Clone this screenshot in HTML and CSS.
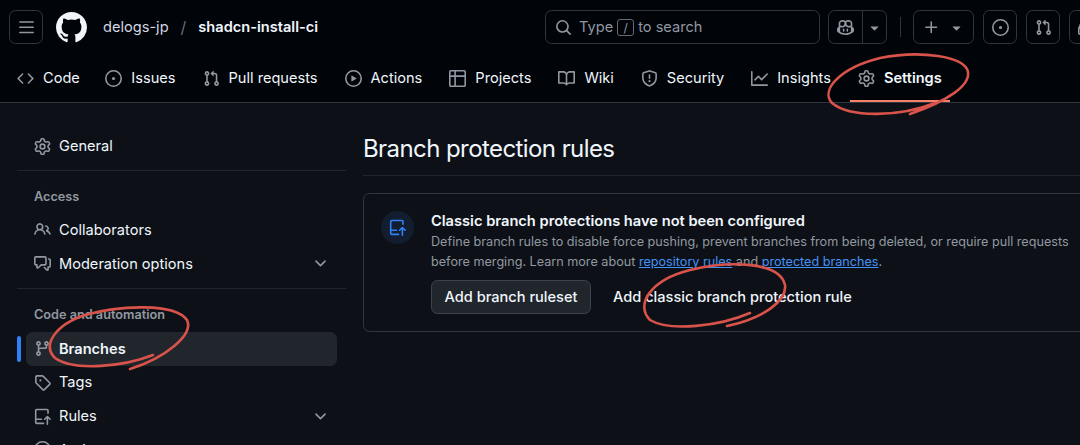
FILE: index.html
```html
<!DOCTYPE html>
<html lang="en">
<head>
<meta charset="utf-8">
<title>Branch protection rules</title>
<link rel="stylesheet" href="styles.css">
</head>
<body>
<svg class="sprite" xmlns="http://www.w3.org/2000/svg">
<symbol id="i-bars" viewBox="0 0 16 16"><path d="M1 2.75A.75.75 0 0 1 1.75 2h12.5a.75.75 0 0 1 0 1.5H1.75A.75.75 0 0 1 1 2.75Zm0 5A.75.75 0 0 1 1.75 7h12.5a.75.75 0 0 1 0 1.5H1.75A.75.75 0 0 1 1 7.75ZM1.75 12h12.5a.75.75 0 0 1 0 1.5H1.75a.75.75 0 0 1 0-1.5Z"/></symbol>
<symbol id="i-github" viewBox="0 0 16 16"><path d="M8 0c4.42 0 8 3.58 8 8a8.013 8.013 0 0 1-5.45 7.59c-.4.08-.55-.17-.55-.38 0-.27.01-1.13.01-2.2 0-.75-.25-1.23-.54-1.48 1.78-.2 3.65-.88 3.65-3.95 0-.88-.31-1.59-.82-2.15.08-.2.36-1.02-.08-2.12 0 0-.67-.22-2.2.82-.64-.18-1.32-.27-2-.27-.68 0-1.36.09-2 .27-1.53-1.03-2.2-.82-2.2-.82-.44 1.1-.16 1.92-.08 2.12-.51.56-.82 1.28-.82 2.15 0 3.06 1.86 3.75 3.64 3.95-.23.2-.44.55-.51 1.07-.46.21-1.61.55-2.33-.66-.15-.24-.6-.83-1.23-.82-.67.01-.27.38.01.53.34.19.73.9.82 1.13.16.45.68 1.31 2.69.94 0 .67.01 1.3.01 1.49 0 .21-.15.45-.55.38A7.995 7.995 0 0 1 0 8c0-4.42 3.58-8 8-8Z"/></symbol>
<symbol id="i-search" viewBox="0 0 16 16"><path d="M10.68 11.74a6 6 0 0 1-7.922-8.982 6 6 0 0 1 8.982 7.922l3.04 3.04a.749.749 0 0 1-.326 1.275.749.749 0 0 1-.734-.215ZM11.5 7a4.499 4.499 0 1 0-8.997 0A4.499 4.499 0 0 0 11.5 7Z"/></symbol>
<symbol id="i-copilot" viewBox="0 0 16 16"><path d="M7.998 15.035c-4.562 0-7.873-2.914-7.998-3.749V9.338c.085-.628.677-1.686 1.588-2.065.013-.07.024-.143.036-.218.029-.183.06-.384.126-.612-.201-.508-.254-1.084-.254-1.656 0-.87.128-1.769.693-2.484.579-.733 1.494-1.124 2.724-1.261 1.206-.134 2.262.034 2.944.765.05.053.096.108.139.165.044-.057.094-.112.143-.165.682-.731 1.738-.899 2.944-.765 1.23.137 2.145.528 2.724 1.261.566.715.693 1.614.693 2.484 0 .572-.053 1.148-.254 1.656.066.228.098.429.126.612.012.076.024.148.037.218.924.385 1.522 1.471 1.591 2.095v1.872c0 .766-3.351 3.795-8.002 3.795Zm0-1.485c2.28 0 4.584-1.11 5.002-1.433V7.862l-.023-.116c-.49.21-1.075.291-1.727.291-1.146 0-2.059-.327-2.71-.991A3.222 3.222 0 0 1 8 6.303a3.24 3.24 0 0 1-.544.743c-.65.664-1.563.991-2.71.991-.652 0-1.236-.081-1.727-.291l-.023.116v4.255c.419.323 2.722 1.433 5.002 1.433ZM6.762 2.83c-.193-.206-.637-.413-1.682-.297-1.019.113-1.479.404-1.713.7-.247.312-.369.789-.369 1.554 0 .793.129 1.171.308 1.371.162.181.519.379 1.442.379.853 0 1.339-.235 1.638-.54.315-.322.527-.827.617-1.553.117-.935-.037-1.395-.241-1.614Zm4.155-.297c-1.044-.116-1.488.091-1.681.297-.204.219-.359.679-.242 1.614.091.726.303 1.231.618 1.553.299.305.784.54 1.638.54.922 0 1.28-.198 1.442-.379.179-.2.308-.578.308-1.371 0-.765-.123-1.242-.37-1.554-.233-.296-.693-.587-1.713-.7Z"/><path d="M6.25 9.037a.75.75 0 0 1 .75.75v1.501a.75.75 0 0 1-1.5 0V9.787a.75.75 0 0 1 .75-.75Zm4.25.75v1.501a.75.75 0 0 1-1.5 0V9.787a.75.75 0 0 1 1.5 0Z"/></symbol>
<symbol id="i-caret" viewBox="0 0 16 16"><path d="m4.427 7.427 3.396 3.396a.25.25 0 0 0 .354 0l3.396-3.396A.25.25 0 0 0 11.396 7H4.604a.25.25 0 0 0-.177.427Z"/></symbol>
<symbol id="i-plus" viewBox="0 0 16 16"><path d="M7.75 2a.75.75 0 0 1 .75.75V7h4.25a.75.75 0 0 1 0 1.5H8.5v4.25a.75.75 0 0 1-1.5 0V8.5H2.75a.75.75 0 0 1 0-1.5H7V2.75A.75.75 0 0 1 7.75 2Z"/></symbol>
<symbol id="i-issue" viewBox="0 0 16 16"><path d="M8 9.5a1.5 1.5 0 1 0 0-3 1.5 1.5 0 0 0 0 3Z"/><path d="M8 0a8 8 0 1 1 0 16A8 8 0 0 1 8 0ZM1.5 8a6.5 6.5 0 1 0 13 0 6.5 6.5 0 0 0-13 0Z"/></symbol>
<symbol id="i-pr" viewBox="0 0 16 16"><path d="M1.5 3.25a2.25 2.25 0 1 1 3 2.122v5.256a2.251 2.251 0 1 1-1.5 0V5.372A2.25 2.25 0 0 1 1.5 3.25Zm5.677-.177L9.573.677A.25.25 0 0 1 10 .854V2.5h1A2.5 2.5 0 0 1 13.5 5v5.628a2.251 2.251 0 1 1-1.5 0V5a1 1 0 0 0-1-1h-1v1.646a.25.25 0 0 1-.427.177L7.177 3.427a.25.25 0 0 1 0-.354ZM3.75 2.5a.75.75 0 1 0 0 1.5.75.75 0 0 0 0-1.5Zm0 9.5a.75.75 0 1 0 0 1.5.75.75 0 0 0 0-1.5Zm8.25.75a.75.75 0 1 0 1.5 0 .75.75 0 0 0-1.5 0Z"/></symbol>
<symbol id="i-inbox" viewBox="0 0 16 16"><path d="M2.8 2.06A1.75 1.75 0 0 1 4.41 1h7.18c.7 0 1.333.417 1.61 1.06l2.74 6.395c.04.093.06.194.06.295v4.5A1.75 1.75 0 0 1 14.25 15H1.75A1.75 1.75 0 0 1 0 13.25v-4.5c0-.101.02-.202.06-.295Zm1.61.44a.25.25 0 0 0-.23.152L1.887 8H4.75a.75.75 0 0 1 .6.3L6.625 10h2.75l1.275-1.7a.75.75 0 0 1 .6-.3h2.863L11.82 2.652a.25.25 0 0 0-.23-.152Zm10.09 7h-2.875l-1.275 1.7a.75.75 0 0 1-.6.3h-3.5a.75.75 0 0 1-.6-.3L4.375 9.5H1.5v3.75c0 .138.112.25.25.25h12.5a.25.25 0 0 0 .25-.25Z"/></symbol>
<symbol id="i-code" viewBox="0 0 16 16"><path d="m11.28 3.22 4.25 4.25a.75.75 0 0 1 0 1.06l-4.25 4.25a.749.749 0 0 1-1.275-.326.749.749 0 0 1 .215-.734L13.94 8l-3.72-3.72a.749.749 0 0 1 .326-1.275.749.749 0 0 1 .734.215Zm-6.56 0a.751.751 0 0 1 1.042.018.751.751 0 0 1 .018 1.042L2.06 8l3.72 3.72a.749.749 0 0 1-.326 1.275.749.749 0 0 1-.734-.215L.47 8.53a.75.75 0 0 1 0-1.06Z"/></symbol>
<symbol id="i-play" viewBox="0 0 16 16"><path d="M8 0a8 8 0 1 1 0 16A8 8 0 0 1 8 0ZM1.5 8a6.5 6.5 0 1 0 13 0 6.5 6.5 0 0 0-13 0Zm4.879-2.773 4.264 2.559a.25.25 0 0 1 0 .428l-4.264 2.559A.25.25 0 0 1 6 10.559V5.442a.25.25 0 0 1 .379-.215Z"/></symbol>
<symbol id="i-table" viewBox="0 0 16 16"><path d="M0 1.75C0 .784.784 0 1.75 0h12.5C15.216 0 16 .784 16 1.75v12.5A1.75 1.75 0 0 1 14.25 16H1.75A1.75 1.75 0 0 1 0 14.25ZM6.5 6.5v8h7.75a.25.25 0 0 0 .25-.25V6.5Zm8-1.5V1.75a.25.25 0 0 0-.25-.25H6.5V5Zm-13 1.5v7.75c0 .138.112.25.25.25H5v-8ZM5 5V1.5H1.75a.25.25 0 0 0-.25.25V5Z"/></symbol>
<symbol id="i-book" viewBox="0 0 16 16"><path d="M0 1.75A.75.75 0 0 1 .75 1h4.253c1.227 0 2.317.59 3 1.501A3.743 3.743 0 0 1 11.006 1h4.245a.75.75 0 0 1 .75.75v10.5a.75.75 0 0 1-.75.75h-4.507a2.25 2.25 0 0 0-1.591.659l-.622.621a.75.75 0 0 1-1.06 0l-.622-.621A2.25 2.25 0 0 0 5.258 13H.75a.75.75 0 0 1-.75-.75Zm7.251 10.324.004-5.073-.002-2.253A2.25 2.25 0 0 0 5.003 2.5H1.5v9h3.757a3.75 3.75 0 0 1 1.994.574ZM8.755 4.75l-.004 7.322a3.752 3.752 0 0 1 1.992-.572H14.5v-9h-3.495a2.25 2.25 0 0 0-2.25 2.25Z"/></symbol>
<symbol id="i-shield" viewBox="0 0 16 16"><path d="M7.467.133a1.748 1.748 0 0 1 1.066 0l5.25 1.68A1.75 1.75 0 0 1 15 3.48V7c0 1.566-.32 3.182-1.303 4.682-.983 1.498-2.585 2.813-5.032 3.855a1.697 1.697 0 0 1-1.33 0c-2.447-1.042-4.049-2.357-5.032-3.855C1.32 10.182 1 8.566 1 7V3.48a1.75 1.75 0 0 1 1.217-1.667Zm.61 1.429a.25.25 0 0 0-.153 0l-5.25 1.68a.25.25 0 0 0-.174.238V7c0 1.358.275 2.666 1.057 3.86.784 1.194 2.121 2.34 4.366 3.297a.196.196 0 0 0 .154 0c2.245-.956 3.582-2.104 4.366-3.298C13.225 9.666 13.5 8.36 13.5 7V3.48a.251.251 0 0 0-.174-.237l-5.25-1.68ZM8.75 4.75v3a.75.75 0 0 1-1.5 0v-3a.75.75 0 0 1 1.5 0ZM9 10.5a1 1 0 1 1-2 0 1 1 0 0 1 2 0Z"/></symbol>
<symbol id="i-graph" viewBox="0 0 16 16"><path d="M1.5 1.75V13.5h13.75a.75.75 0 0 1 0 1.5H.75a.75.75 0 0 1-.75-.75V1.75a.75.75 0 0 1 1.5 0Zm14.28 2.53-5.25 5.25a.75.75 0 0 1-1.06 0L7 7.06 4.28 9.78a.751.751 0 0 1-1.042-.018.751.751 0 0 1-.018-1.042l3.25-3.25a.75.75 0 0 1 1.06 0L10 7.94l4.72-4.72a.751.751 0 0 1 1.042.018.751.751 0 0 1 .018 1.042Z"/></symbol>
<symbol id="i-gear" viewBox="0 0 16 16"><path d="M8 0a8.2 8.2 0 0 1 .701.031C9.444.095 9.99.645 10.16 1.29l.288 1.107c.018.066.079.158.212.224.231.114.454.243.668.386.123.082.233.09.299.071l1.103-.303c.644-.176 1.392.021 1.82.63.27.385.506.792.704 1.218.315.675.111 1.422-.364 1.891l-.814.806c-.049.048-.098.147-.088.294.016.257.016.515 0 .772-.01.147.038.246.088.294l.814.806c.475.469.679 1.216.364 1.891a7.977 7.977 0 0 1-.704 1.217c-.428.61-1.176.807-1.82.63l-1.102-.302c-.067-.019-.177-.011-.3.071a5.909 5.909 0 0 1-.668.386c-.133.066-.194.158-.211.224l-.29 1.106c-.168.646-.715 1.196-1.458 1.26a8.006 8.006 0 0 1-1.402 0c-.743-.064-1.289-.614-1.458-1.26l-.289-1.106c-.018-.066-.079-.158-.212-.224a5.738 5.738 0 0 1-.668-.386c-.123-.082-.233-.09-.299-.071l-1.103.303c-.644.176-1.392-.021-1.82-.63a8.12 8.12 0 0 1-.704-1.218c-.315-.675-.111-1.422.363-1.891l.815-.806c.05-.048.098-.147.088-.294a6.214 6.214 0 0 1 0-.772c.01-.147-.038-.246-.088-.294l-.815-.806C.635 6.045.431 5.298.746 4.623a7.92 7.92 0 0 1 .704-1.217c.428-.61 1.176-.807 1.82-.63l1.102.302c.067.019.177.011.3-.071.214-.143.437-.272.668-.386.133-.066.194-.158.211-.224l.29-1.106C6.009.645 6.556.095 7.299.03 7.53.01 7.764 0 8 0Zm-.571 1.525c-.036.003-.108.036-.137.146l-.289 1.105c-.147.561-.549.967-.998 1.189-.173.086-.34.183-.5.29-.417.278-.97.423-1.529.27l-1.103-.303c-.109-.03-.175.016-.195.045-.22.312-.412.644-.573.99-.014.031-.021.11.059.19l.815.806c.411.406.562.957.53 1.456a4.709 4.709 0 0 0 0 .582c.032.499-.119 1.05-.53 1.456l-.815.806c-.081.08-.073.159-.059.19.162.346.353.677.573.989.02.03.085.076.195.046l1.102-.303c.56-.153 1.113-.008 1.53.27.161.107.328.204.501.29.447.222.85.629.997 1.189l.289 1.105c.029.109.101.143.137.146a6.6 6.6 0 0 0 1.142 0c.036-.003.108-.036.137-.146l.289-1.105c.147-.561.549-.967.998-1.189.173-.086.34-.183.5-.29.417-.278.97-.423 1.529-.27l1.103.303c.109.029.175-.016.195-.045.22-.313.411-.644.573-.99.014-.031.021-.11-.059-.19l-.815-.806c-.411-.406-.562-.957-.53-1.456a4.709 4.709 0 0 0 0-.582c-.032-.499.119-1.05.53-1.456l.815-.806c.081-.08.073-.159.059-.19a6.464 6.464 0 0 0-.573-.989c-.02-.03-.085-.076-.195-.046l-1.102.303c-.56.153-1.113.008-1.53-.27a4.44 4.44 0 0 0-.501-.29c-.447-.222-.85-.629-.997-1.189l-.289-1.105c-.029-.11-.101-.143-.137-.146a6.6 6.6 0 0 0-1.142 0ZM11 8a3 3 0 1 1-6 0 3 3 0 0 1 6 0ZM9.5 8a1.5 1.5 0 1 0-3.001.001A1.5 1.5 0 0 0 9.5 8Z"/></symbol>
<symbol id="i-people" viewBox="0 0 16 16"><path d="M2 5.5a3.5 3.5 0 1 1 5.898 2.549 5.508 5.508 0 0 1 3.034 4.084.75.75 0 1 1-1.482.235 4 4 0 0 0-7.9 0 .75.75 0 0 1-1.482-.236A5.507 5.507 0 0 1 3.102 8.05 3.493 3.493 0 0 1 2 5.5ZM11 4a3.001 3.001 0 0 1 2.22 5.018 5.01 5.01 0 0 1 2.56 3.012.749.749 0 0 1-.885.954.752.752 0 0 1-.549-.514 3.507 3.507 0 0 0-2.522-2.372.75.75 0 0 1-.574-.73v-.352a.75.75 0 0 1 .416-.672A1.5 1.5 0 0 0 11 5.5.75.75 0 0 1 11 4Zm-5.5-.5a2 2 0 1 0-.001 3.999A2 2 0 0 0 5.5 3.5Z"/></symbol>
<symbol id="i-comments" viewBox="0 0 16 16"><path d="M1.75 1h8.5c.966 0 1.75.784 1.75 1.75v5.5A1.75 1.75 0 0 1 10.25 10H7.061l-2.574 2.573A1.458 1.458 0 0 1 2 11.543V10h-.25A1.75 1.75 0 0 1 0 8.25v-5.5C0 1.784.784 1 1.75 1ZM1.5 2.75v5.5c0 .138.112.25.25.25h1a.75.75 0 0 1 .75.75v2.19l2.72-2.72a.749.749 0 0 1 .53-.22h3.5a.25.25 0 0 0 .25-.25v-5.5a.25.25 0 0 0-.25-.25h-8.5a.25.25 0 0 0-.25.25Zm13 2a.25.25 0 0 0-.25-.25h-.5a.75.75 0 0 1 0-1.5h.5c.966 0 1.75.784 1.75 1.75v5.5A1.75 1.75 0 0 1 14.25 12H14v1.543a1.458 1.458 0 0 1-2.487 1.03L9.22 12.28a.749.749 0 0 1 .326-1.275.749.749 0 0 1 .734.215l2.22 2.22v-2.19a.75.75 0 0 1 .75-.75h1a.25.25 0 0 0 .25-.25Z"/></symbol>
<symbol id="i-branch" viewBox="0 0 16 16"><path d="M9.5 3.25a2.25 2.25 0 1 1 3 2.122V6A2.5 2.5 0 0 1 10 8.5H6a1 1 0 0 0-1 1v1.128a2.251 2.251 0 1 1-1.5 0V5.372a2.25 2.25 0 1 1 1.5 0v1.836A2.493 2.493 0 0 1 6 7h4a1 1 0 0 0 1-1v-.628A2.25 2.25 0 0 1 9.5 3.25Zm-6 0a.75.75 0 1 0 1.5 0 .75.75 0 0 0-1.5 0Zm8.25-.75a.75.75 0 1 0 0 1.5.75.75 0 0 0 0-1.5ZM4.25 12a.75.75 0 1 0 0 1.5.75.75 0 0 0 0-1.5Z"/></symbol>
<symbol id="i-tag" viewBox="0 0 16 16"><path d="M1 7.775V2.75C1 1.784 1.784 1 2.75 1h5.025c.464 0 .91.184 1.238.513l6.25 6.25a1.75 1.75 0 0 1 0 2.474l-5.026 5.026a1.75 1.75 0 0 1-2.474 0l-6.25-6.25A1.752 1.752 0 0 1 1 7.775Zm1.5 0c0 .066.026.13.073.177l6.25 6.25a.25.25 0 0 0 .354 0l5.025-5.025a.25.25 0 0 0 0-.354l-6.25-6.25a.25.25 0 0 0-.177-.073H2.75a.25.25 0 0 0-.25.25ZM6 5a1 1 0 1 1 0 2 1 1 0 0 1 0-2Z"/></symbol>
<symbol id="i-rules" viewBox="0 0 16 16"><path class="line" d="M9 14.5H2.6a1 1 0 0 1-1-1V2.4a1 1 0 0 1 1-1h9.6a1 1 0 0 1 1 1V5M1.6 10.6H7M12.6 15.2V8.4M10 10.6l2.6-2.6 2.6 2.6"/></symbol>
<symbol id="i-chev" viewBox="0 0 16 16"><path d="M12.78 5.22a.749.749 0 0 1 0 1.06l-4.25 4.25a.749.749 0 0 1-1.06 0L3.22 6.28a.749.749 0 1 1 1.06-1.06L8 8.939l3.72-3.719a.749.749 0 0 1 1.06 0Z"/></symbol>
</svg>

<header class="top">
  <div class="top-row">
    <div class="context">
      <button class="btn-icon"><svg class="ic"><use href="#i-bars"/></svg></button>
      <svg class="logo"><use href="#i-github"/></svg>
      <a class="crumb">delogs-jp</a>
      <span class="slash">/</span>
      <a class="crumb crumb-strong">shadcn-install-ci</a>
    </div>
    <div class="actions">
      <div class="search">
        <svg class="ic"><use href="#i-search"/></svg>
        <span>Type</span><kbd class="slash-key">/</kbd><span>to search</span>
      </div>
      <div class="split">
        <span class="split-main"><svg class="ic"><use href="#i-copilot"/></svg></span>
        <span class="split-caret"><svg class="ic"><use href="#i-caret"/></svg></span>
      </div>
      <span class="vsep"></span>
      <div class="plus">
        <svg class="ic"><use href="#i-plus"/></svg>
        <svg class="ic"><use href="#i-caret"/></svg>
      </div>
      <button class="btn-icon"><svg class="ic"><use href="#i-issue"/></svg></button>
      <button class="btn-icon"><svg class="ic"><use href="#i-pr"/></svg></button>
      <button class="btn-icon"><svg class="ic"><use href="#i-inbox"/></svg></button>
    </div>
  </div>
  <nav class="tabs">
    <a class="tab tab-first"><svg class="ic"><use href="#i-code"/></svg>Code</a>
    <a class="tab"><svg class="ic"><use href="#i-issue"/></svg>Issues</a>
    <a class="tab"><svg class="ic"><use href="#i-pr"/></svg>Pull requests</a>
    <a class="tab"><svg class="ic"><use href="#i-play"/></svg>Actions</a>
    <a class="tab"><svg class="ic"><use href="#i-table"/></svg>Projects</a>
    <a class="tab"><svg class="ic"><use href="#i-book"/></svg>Wiki</a>
    <a class="tab"><svg class="ic"><use href="#i-shield"/></svg>Security</a>
    <a class="tab"><svg class="ic"><use href="#i-graph"/></svg>Insights</a>
    <a class="tab tab-active"><svg class="ic"><use href="#i-gear"/></svg>Settings</a>
  </nav>
</header>

<div class="page">
  <aside class="side">
    <a class="row"><svg class="ic"><use href="#i-gear"/></svg>General</a>
    <hr class="rule">
    <h3 class="group">Access</h3>
    <a class="row"><svg class="ic"><use href="#i-people"/></svg>Collaborators</a>
    <a class="row"><svg class="ic"><use href="#i-comments"/></svg>Moderation options<svg class="ic chev"><use href="#i-chev"/></svg></a>
    <hr class="rule">
    <h3 class="group group-wide">Code and automation</h3>
    <a class="row row-active"><svg class="ic"><use href="#i-branch"/></svg>Branches</a>
    <a class="row"><svg class="ic"><use href="#i-tag"/></svg>Tags</a>
    <a class="row"><svg class="ic"><use href="#i-rules"/></svg>Rules<svg class="ic chev"><use href="#i-chev"/></svg></a>
    <a class="row"><svg class="ic"><use href="#i-play"/></svg>Actions<svg class="ic chev"><use href="#i-chev"/></svg></a>
  </aside>

  <main class="main">
    <h1 class="title">Branch protection rules</h1>
    <section class="card">
      <span class="badge"><svg class="ic"><use href="#i-rules"/></svg></span>
      <div class="card-body">
        <h2 class="card-title">Classic branch protections have not been configured</h2>
        <p class="card-text">Define branch rules to disable force pushing, prevent branches from being deleted, or require pull requests before merging. Learn more about <a class="link">repository rules</a> and <a class="link">protected branches</a>.</p>
        <div class="card-actions">
          <button class="btn">Add branch ruleset</button>
          <button class="btn-plain">Add classic branch protection rule</button>
        </div>
      </div>
    </section>
  </main>
</div>

<svg class="marks" viewBox="0 0 1080 445" xmlns="http://www.w3.org/2000/svg">
  <path d="M935 103C900 117 850 118 832 103 820 90 840 68 880 58 920 50 965 56 968 72 970 85 950 100 910 114"/>
  <path d="M153 355C125 366 75 372 55 358 42 345 55 325 85 315 120 305 175 303 187 320 194 335 165 358 130 369"/>
  <path d="M750 313C720 326 670 332 650 320 635 305 650 280 690 270 730 260 780 262 785 285 787 300 765 318 727 326"/>
</svg>
</body>
</html>
```
FILE: styles.css
```css
* { box-sizing: border-box; }
html, body { margin: 0; height: 100%; overflow: hidden; }
body {
  position: relative;
  width: 1080px;
  height: 445px;
  background: #0d1117;
  color: #f0f6fc;
  font-family: Inter, "Liberation Sans", sans-serif;
  font-size: 14.6px;
}
.sprite { display: none; }
.ic { width: 17px; height: 17px; fill: currentColor; flex: none; color: #9198a1; }
.line { fill: none; stroke: currentColor; stroke-width: 1.5; stroke-linecap: round; stroke-linejoin: round; }

.top { height: 103px; background: #010409; border-bottom: 1px solid #30363d; display: flex; flex-direction: column; }
.top-row { display: flex; padding: 10px 0 0 9px; height: 58px; flex: none; }
.context { flex: 0 0 536px; display: flex; align-items: center; height: 34px; }
.actions { flex: none; display: flex; align-items: center; height: 34px; gap: 9px; }
.btn-icon {
  width: 34px; height: 34px; flex: none; padding: 0;
  display: flex; align-items: center; justify-content: center;
  background: transparent; border: 1px solid #30363d; border-radius: 6.5px;
}
.logo { width: 31px; height: 31px; fill: #f0f6fc; margin: 0 16px 0 13px; flex: none; }
.crumb { font-size: 14.6px; color: #d1d7e0; }
.crumb-strong { font-weight: 600; color: #f0f6fc; }
.slash { color: #656c76; margin: 0 12px; font-size: 16px; }
.search {
  width: 275px; height: 34px; border: 1px solid #30363d; border-radius: 6.5px;
  display: flex; align-items: center; padding-left: 9px; gap: 4px; color: #9198a1; font-size: 14.6px;
}
.search .ic { margin-right: 3px; }
.slash-key {
  width: 17px; height: 17px; border: 1px solid #656c76; border-radius: 3px;
  font: 12px Inter, sans-serif; display: flex; align-items: center; justify-content: center; color: #9198a1;
}
.split { display: flex; width: 59px; height: 34px; border: 1px solid #30363d; border-radius: 6.5px; margin-left: -1px; }
.split-main { width: 34px; display: flex; align-items: center; justify-content: center; border-right: 1px solid #30363d; }
.split-caret { flex: 1; display: flex; align-items: center; justify-content: center; }
.vsep { width: 1px; height: 20px; background: #30363d; margin: 0 3px 0 4px; }
.plus { width: 61px; height: 34px; border: 1px solid #30363d; border-radius: 6.5px; display: flex; align-items: center; gap: 8px; padding-left: 9px; }

.tabs { display: flex; padding-left: 9px; flex: 1; }
.tab { display: flex; align-items: center; gap: 9px; padding: 0 8px 2px; margin-right: 11px; color: #f0f6fc; height: 46px; margin-top: -2px; }
.tab-first { margin-right: 9.5px; }
.tab-active { font-weight: 600; box-shadow: inset 0 -2px 0 #f78166; }

.page { display: flex; padding-left: 17px; }
.side { flex: 0 0 329px; padding-top: 26.25px; }
.row { display: flex; align-items: center; gap: 8px; height: 33.75px; margin-left: 9px; width: 311px; padding: 0 8px; position: relative; color: #f0f6fc; }
.row-active { background: #21262d; border-radius: 6.5px; font-weight: 600; }
.row-active::before { content: ""; position: absolute; left: -9px; top: 4px; bottom: 4px; width: 4px; border-radius: 4px; background: #2f81f7; }
.chev { margin-left: auto; }
.rule { border: 0; height: 1px; background: #21262d; margin: 7.25px 0 0 0; }
.group { margin: 16.75px 0 8px 17px; font-size: 12.7px; font-weight: 600; color: #9198a1; line-height: 17px; height: 17px; }
.group-wide { margin-top: 17px; margin-bottom: 9px; }

.main { margin-left: 17px; width: 760px; flex: none; padding-top: 28px; }
.title { margin: 0; font-size: 24px; font-weight: 400; line-height: 36px; height: 45px; padding-bottom: 9px; border-bottom: 1px solid #21262d; color: #f0f6fc; letter-spacing: -.58px; }
.card { margin-top: 17px; height: 139px; border: 1px solid #30363d; border-radius: 6.5px; display: flex; padding: 17px 15px; gap: 17px; }
.badge { width: 33px; height: 33px; margin-left: 2px; border-radius: 50%; background: #121d2f; display: flex; align-items: center; justify-content: center; flex: none; }
.badge .ic { color: #2f81f7; }
.card-body { width: 650px; }
.card-title { margin: 0; font-size: 14.65px; font-weight: 600; line-height: 21px; color: #f0f6fc; }
.card-text { margin: 0; font-size: 12.63px; line-height: 19.6px; color: #9198a1; }
.link { color: #4493f8; text-decoration: underline; }
.card-actions { display: flex; align-items: center; margin-top: 9px; gap: 22px; }
.btn { height: 34px; width: 160px; padding: 0; border: 1px solid #3d444d; border-radius: 6.5px; background: #21262d; color: #f0f6fc; font: 500 14.6px Inter, sans-serif; }
.btn-plain { border: 0; background: none; padding: 0; color: #f0f6fc; font: 500 14.6px Inter, sans-serif; }

.marks { position: absolute; left: 0; top: 0; width: 1080px; height: 445px; pointer-events: none; fill: none; stroke: #d9534a; stroke-width: 2.6; stroke-linecap: round; }
```
